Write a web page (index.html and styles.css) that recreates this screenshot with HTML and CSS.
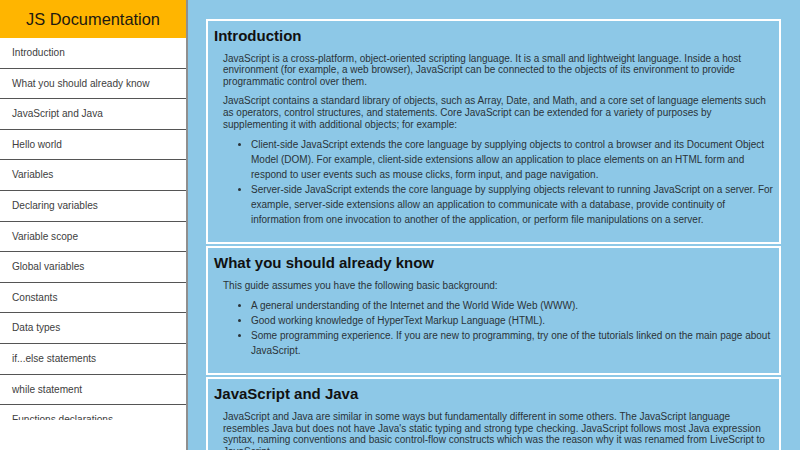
FILE: index.html
```html
<!DOCTYPE html>
<html lang="en">
<head>
<meta charset="utf-8">
<title>JS Documentation</title>
<link rel="stylesheet" href="styles.css">
</head>
<body>
<nav class="sidebar" id="navbar">
  <header class="nav-title">JS Documentation</header>
  <ul class="nav-list">
    <li><a class="nav-link" href="#Introduction">Introduction</a></li>
    <li><a class="nav-link" href="#What_you_should_already_know">What you should already know</a></li>
    <li><a class="nav-link" href="#JavaScript_and_Java">JavaScript and Java</a></li>
    <li><a class="nav-link" href="#Hello_world">Hello world</a></li>
    <li><a class="nav-link" href="#Variables">Variables</a></li>
    <li><a class="nav-link" href="#Declaring_variables">Declaring variables</a></li>
    <li><a class="nav-link" href="#Variable_scope">Variable scope</a></li>
    <li><a class="nav-link" href="#Global_variables">Global variables</a></li>
    <li><a class="nav-link" href="#Constants">Constants</a></li>
    <li><a class="nav-link" href="#Data_types">Data types</a></li>
    <li><a class="nav-link" href="#if...else_statements">if...else statements</a></li>
    <li><a class="nav-link" href="#while_statement">while statement</a></li>
    <li><a class="nav-link" href="#Functions_declarations">Functions declarations</a></li>
    <li><a class="nav-link" href="#Reference">Reference</a></li>
  </ul>
</nav>
<main class="main" id="main-doc">
  <section class="doc" id="Introduction">
    <h2 class="doc-title">Introduction</h2>
    <div class="doc-body">
      <p>JavaScript is a cross-platform, object-oriented scripting language. It is a small and lightweight language. Inside a host environment (for example, a web browser), JavaScript can be connected to the objects of its environment to provide programmatic control over them.</p>
      <p>JavaScript contains a standard library of objects, such as Array, Date, and Math, and a core set of language elements such as operators, control structures, and statements. Core JavaScript can be extended for a variety of purposes by supplementing it with additional objects; for example:</p>
      <ul>
        <li>Client-side JavaScript extends the core language by supplying objects to control a browser and its Document Object Model (DOM). For example, client-side extensions allow an application to place elements on an HTML form and respond to user events such as mouse clicks, form input, and page navigation.</li>
        <li>Server-side JavaScript extends the core language by supplying objects relevant to running JavaScript on a server. For example, server-side extensions allow an application to communicate with a database, provide continuity of information from one invocation to another of the application, or perform file manipulations on a server.</li>
      </ul>
    </div>
  </section>
  <section class="doc" id="What_you_should_already_know">
    <h2 class="doc-title">What you should already know</h2>
    <div class="doc-body">
      <p>This guide assumes you have the following basic background:</p>
      <ul>
        <li>A general understanding of the Internet and the World Wide Web (WWW).</li>
        <li>Good working knowledge of HyperText Markup Language (HTML).</li>
        <li>Some programming experience. If you are new to programming, try one of the tutorials linked on the main page about JavaScript.</li>
      </ul>
    </div>
  </section>
  <section class="doc" id="JavaScript_and_Java">
    <h2 class="doc-title">JavaScript and Java</h2>
    <div class="doc-body">
      <p>JavaScript and Java are similar in some ways but fundamentally different in some others. The JavaScript language resembles Java but does not have Java's static typing and strong type checking. JavaScript follows most Java expression syntax, naming conventions and basic control-flow constructs which was the reason why it was renamed from LiveScript to JavaScript.</p>
      <p>In contrast to Java's compile-time system of classes built by declarations, JavaScript supports a runtime system based on a small number of data types representing numeric, Boolean, and string values.</p>
    </div>
  </section>
</main>
</body>
</html>
```

FILE: styles.css
```css
html, body {
  margin: 0;
  padding: 0;
  height: 100%;
}

body {
  display: flex;
  height: 450px;
  overflow: hidden;
  font-family: "Liberation Sans", Arial, sans-serif;
  background: #8dc8e7;
}

.sidebar {
  flex: 0 0 186px;
  display: flex;
  flex-direction: column;
  background: #ffffff;
  border-right: 2px solid #8f8f8f;
}

.nav-title {
  height: 38px;
  flex: 0 0 38px;
  display: flex;
  align-items: center;
  justify-content: center;
  background: #ffb500;
  color: #1e1a10;
  font-size: 16.4px;
}

.nav-list {
  list-style: none;
  margin: 0;
  padding: 0;
  height: 381.5px;
  flex: 0 0 381.5px;
  overflow: hidden;
}

.nav-list li {
  border-bottom: 1px solid #555555;
}

.nav-link {
  display: block;
  padding: 9px 12px;
  height: 11.6px;
  line-height: 11.6px;
  font-size: 10.1px;
  color: #404040;
  text-decoration: none;
}

.main {
  flex: 1;
  padding: 19px 19px 0 18px;
  display: flex;
  flex-direction: column;
  gap: 2.5px;
}

.doc {
  flex: 0 0 auto;
  border: 2px solid #ffffff;
  padding: 5.5px 4px 0 6px;
}

.doc-title {
  margin: 0;
  font-size: 15px;
  line-height: 18px;
  color: #111111;
  font-weight: bold;
}

.doc-body {
  padding: 8px 0 15px 9px;
  color: #2a3338;
  font-size: 10px;
  line-height: 11.8px;
}

.doc-body p {
  margin: 0;
}

.doc-body p + p {
  margin-top: 7.3px;
}

.doc-body ul {
  margin: 0;
  padding-left: 28px;
  line-height: 15px;
}

.doc-body p + ul {
  margin-top: 6.2px;
}
```
